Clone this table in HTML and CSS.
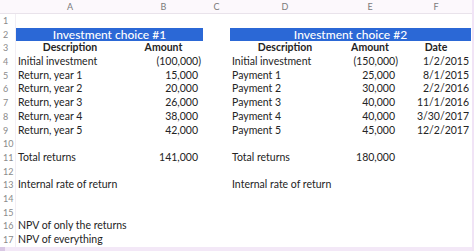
FILE: index.html
```html
<!DOCTYPE html>
<html>
<head>
<meta charset="utf-8">
<link rel="stylesheet" href="styles.css">
</head>
<body>
<div class="sheet">
  <div class="grid">
    <div class="corner"></div>
    <div class="colhead">A</div><div class="colhead">B</div><div class="colhead">C</div><div class="colhead">D</div><div class="colhead">E</div><div class="colhead">F</div>

    <div class="rn">1</div><div></div><div></div><div></div><div></div><div></div><div></div>

    <div class="rn">2</div><div class="title t1">Investment choice #1</div><div></div><div class="title t2">Investment choice #2</div>

    <div class="rn">3</div><div class="c hd">Description</div><div class="c hd">Amount</div><div></div><div class="c hd">Description</div><div class="c hd">Amount</div><div class="c hd">Date</div>

    <div class="rn">4</div><div class="l">Initial investment</div><div class="r neg">(100,000)</div><div></div><div class="l">Initial investment</div><div class="r neg">(150,000)</div><div class="r d">1/2/2015</div>
    <div class="rn">5</div><div class="l">Return, year 1</div><div class="r">15,000</div><div></div><div class="l">Payment 1</div><div class="r">25,000</div><div class="r d">8/1/2015</div>
    <div class="rn">6</div><div class="l">Return, year 2</div><div class="r">20,000</div><div></div><div class="l">Payment 2</div><div class="r">30,000</div><div class="r d">2/2/2016</div>
    <div class="rn">7</div><div class="l">Return, year 3</div><div class="r">26,000</div><div></div><div class="l">Payment 3</div><div class="r">40,000</div><div class="r d">11/1/2016</div>
    <div class="rn">8</div><div class="l">Return, year 4</div><div class="r">38,000</div><div></div><div class="l">Payment 4</div><div class="r">40,000</div><div class="r d">3/30/2017</div>
    <div class="rn">9</div><div class="l">Return, year 5</div><div class="r">42,000</div><div></div><div class="l">Payment 5</div><div class="r">45,000</div><div class="r d">12/2/2017</div>
    <div class="rn">10</div><div></div><div></div><div></div><div></div><div></div><div></div>
    <div class="rn">11</div><div class="l">Total returns</div><div class="r">141,000</div><div></div><div class="l">Total returns</div><div class="r">180,000</div><div></div>
    <div class="rn">12</div><div></div><div></div><div></div><div></div><div></div><div></div>
    <div class="rn">13</div><div class="l">Internal rate of return</div><div></div><div></div><div class="l">Internal rate of return</div><div></div><div></div>
    <div class="rn">14</div><div></div><div></div><div></div><div></div><div></div><div></div>
    <div class="rn">15</div><div></div><div></div><div></div><div></div><div></div><div></div>
    <div class="rn">16</div><div class="l">NPV of only the returns</div><div></div><div></div><div></div><div></div><div></div>
    <div class="rn">17</div><div class="l">NPV of everything</div><div></div><div></div><div></div><div></div><div></div>
  </div>
  <div class="bottom"></div>
</div>
</body>
</html>
```
FILE: styles.css
```css
html, body {
  margin: 0;
  padding: 0;
  background: #ffffff;
}
body {
  width: 474px;
  height: 251px;
  overflow: hidden;
  font-family: Lato, "Open Sans", sans-serif;
  font-size: 10.5px;
  color: #242424;
}
.sheet {
  width: 474px;
  height: 251px;
  display: flex;
  flex-direction: column;
  border-right: 2px solid #f1e4f6;
  box-sizing: border-box;
}
.grid {
  display: grid;
  grid-template-columns: 16px 108px 79px 27px 110px 60px 72px;
  grid-template-rows: 14px repeat(17, 13.7px);
  flex: none;
}
.grid > div {
  white-space: nowrap;
  overflow: visible;
  line-height: 13.7px;
}
.corner, .colhead {
  background: #fcf8fc;
  border-bottom: 1px solid #e9e3eb;
  box-sizing: border-box;
}
.colhead {
  text-align: center;
  color: #7a7a7a;
  font-size: 9px;
  line-height: 13px !important;
}
.rn {
  color: #8a8a8a;
  font-size: 9px;
  padding-left: 3px;
  border-right: 1px solid #f2eef4;
}
.title {
  background: #2b68d6;
  color: #ffffff;
  text-align: center;
  font-size: 12px;
  font-weight: 500;
}
.t1 { grid-column: 2 / 4; }
.t2 { grid-column: 5 / 8; margin-right: 1px; }
.hd {
  font-weight: 700;
  text-align: center;
}
.l {
  padding-left: 2px;
}
.r {
  text-align: right;
  padding-right: 5px;
}
.r.neg {
  padding-right: 2px;
}
.r.d {
  padding-right: 3px;
}
.bottom {
  flex: 1;
  background: #f3e8f7;
  border-left: 5px solid #d9c8e4;
}
```
